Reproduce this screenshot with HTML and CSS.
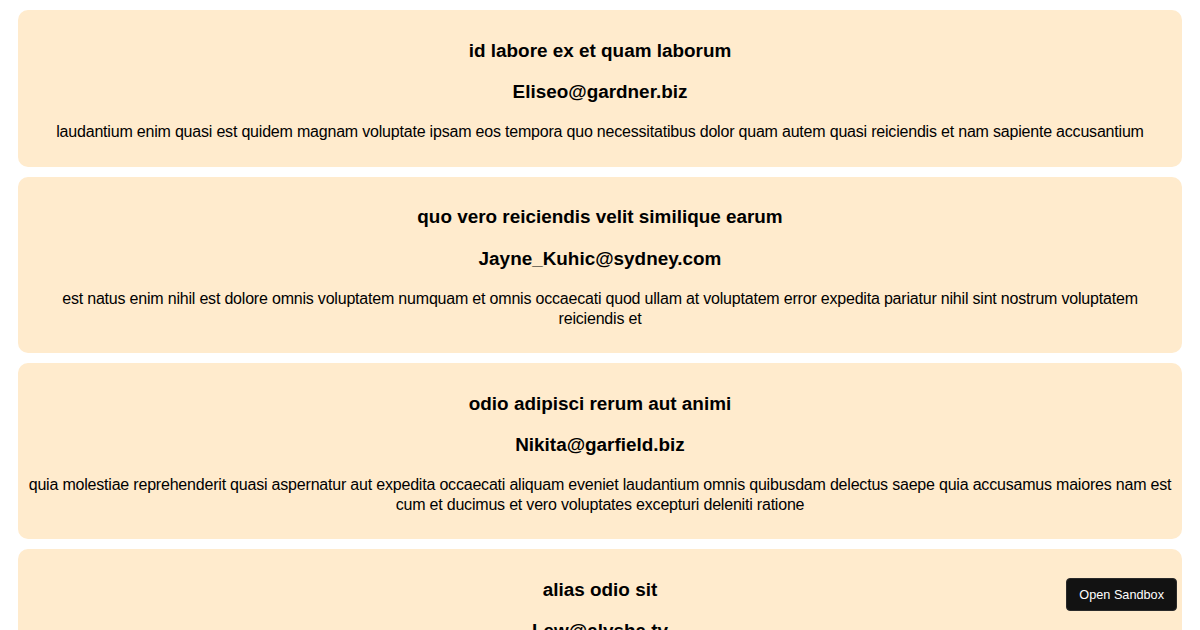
FILE: index.html
```html
<!DOCTYPE html>
<html>
<head>
<meta charset="utf-8">
<link rel="stylesheet" href="styles.css">
</head>
<body>
<div class="list">
  <div class="card">
    <h3>id labore ex et quam laborum</h3>
    <h3>Eliseo@gardner.biz</h3>
    <p>laudantium enim quasi est quidem magnam voluptate ipsam eos tempora quo necessitatibus dolor quam autem quasi reiciendis et nam sapiente accusantium</p>
  </div>
  <div class="card">
    <h3>quo vero reiciendis velit similique earum</h3>
    <h3>Jayne_Kuhic@sydney.com</h3>
    <p>est natus enim nihil est dolore omnis voluptatem numquam et omnis occaecati quod ullam at voluptatem error expedita pariatur nihil sint nostrum voluptatem reiciendis et</p>
  </div>
  <div class="card">
    <h3>odio adipisci rerum aut animi</h3>
    <h3>Nikita@garfield.biz</h3>
    <p>quia molestiae reprehenderit quasi aspernatur aut expedita occaecati aliquam eveniet laudantium omnis quibusdam delectus saepe quia accusamus maiores nam est cum et ducimus et vero voluptates excepturi deleniti ratione</p>
  </div>
  <div class="card">
    <h3>alias odio sit</h3>
    <h3>Lew@alysha.tv</h3>
    <p>non et atque occaecati deserunt quas accusantium unde odit nobis qui voluptatem quia voluptas consequuntur itaque dolor et qui rerum deleniti ut occaecati</p>
  </div>
</div>
<button class="sandbox">Open Sandbox</button>
</body>
</html>
```
FILE: styles.css
```css
html, body {
  margin: 0;
  padding: 0;
  background: #fff;
}
body {
  font-family: "Liberation Sans", Arial, sans-serif;
  color: #000;
}
.list {
  display: flex;
  flex-direction: column;
  gap: 10px;
  padding: 10px 18px;
}
.card {
  background: #ffebcd;
  border-radius: 10px;
  padding: 11px 10px 9px;
  text-align: center;
  display: flow-root;
}
.card h3 {
  font-size: 18.9px;
  line-height: 22.6px;
  margin: 18.72px 0;
  font-weight: bold;
}
.card p {
  font-size: 16px;
  line-height: 19.4px;
  letter-spacing: -0.2px;
  margin: 16px 0;
}
.sandbox {
  position: fixed;
  right: 23px;
  bottom: 19px;
  background: #121212;
  color: #fff;
  border: 1px solid #2a2a2a;
  border-radius: 4px;
  font-family: "Liberation Sans", Arial, sans-serif;
  font-size: 12.7px;
  padding: 0 12px;
  height: 33px;
  cursor: pointer;
}
```
